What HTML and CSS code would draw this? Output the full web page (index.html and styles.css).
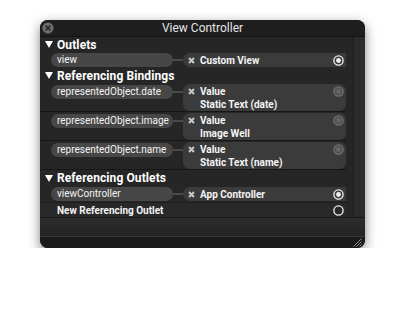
FILE: index.html
```html
<!DOCTYPE html>
<html lang="en">

<head>
    <meta charset="UTF-8">
    <title>View Controller</title>
    <link rel="stylesheet" href="styles.css">
</head>

<body>
    <div class="hud">
        <div class="titlebar">
            <svg class="close" width="12" height="12" viewBox="0 0 12 12">
                <circle cx="6" cy="6" r="5.6" fill="#6d6d6d" />
                <path d="M3.6 3.6 L8.4 8.4 M8.4 3.6 L3.6 8.4" stroke="#2a2a2a" stroke-width="1.6" />
            </svg>
            <span class="title">View Controller</span>
        </div>

        <div class="content">
            <div class="list">
                <div class="section">
                    <svg class="arrow" width="8" height="7" viewBox="0 0 8 7"><polygon points="0,0 8,0 4,7" fill="#fff" /></svg>
                    Outlets
                </div>
                <div class="row">
                    <span class="pill">view</span>
                    <span class="wire"></span>
                    <div class="target">
                        <svg class="x" width="7" height="7" viewBox="0 0 7 7"><path d="M1 1 L6 6 M6 1 L1 6" /></svg>
                        <span class="name">Custom View</span>
                        <svg class="radio" width="11" height="11" viewBox="0 0 11 11"><circle class="ring" cx="5.5" cy="5.5" r="4.6" /><circle class="dot" cx="5.5" cy="5.5" r="2.4" /></svg>
                    </div>
                </div>

                <div class="section">
                    <svg class="arrow" width="8" height="7" viewBox="0 0 8 7"><polygon points="0,0 8,0 4,7" fill="#fff" /></svg>
                    Referencing Bindings
                </div>
                <div class="row binding">
                    <span class="pill">representedObject.date</span>
                    <span class="wire"></span>
                    <div class="target multi">
                        <div class="target-line">
                            <svg class="x" width="7" height="7" viewBox="0 0 7 7"><path d="M1 1 L6 6 M6 1 L1 6" /></svg>
                            <span class="name">Value</span>
                            <svg class="radio dim" width="11" height="11" viewBox="0 0 11 11"><circle class="ring" cx="5.5" cy="5.5" r="4.6" /><circle class="dot" cx="5.5" cy="5.5" r="2.4" /></svg>
                        </div>
                        <div class="target-sub">Static Text (date)</div>
                    </div>
                </div>
                <div class="row binding">
                    <span class="pill">representedObject.image</span>
                    <span class="wire"></span>
                    <div class="target multi">
                        <div class="target-line">
                            <svg class="x" width="7" height="7" viewBox="0 0 7 7"><path d="M1 1 L6 6 M6 1 L1 6" /></svg>
                            <span class="name">Value</span>
                            <svg class="radio dim" width="11" height="11" viewBox="0 0 11 11"><circle class="ring" cx="5.5" cy="5.5" r="4.6" /><circle class="dot" cx="5.5" cy="5.5" r="2.4" /></svg>
                        </div>
                        <div class="target-sub">Image Well</div>
                    </div>
                </div>
                <div class="row binding">
                    <span class="pill">representedObject.name</span>
                    <span class="wire"></span>
                    <div class="target multi">
                        <div class="target-line">
                            <svg class="x" width="7" height="7" viewBox="0 0 7 7"><path d="M1 1 L6 6 M6 1 L1 6" /></svg>
                            <span class="name">Value</span>
                            <svg class="radio dim" width="11" height="11" viewBox="0 0 11 11"><circle class="ring" cx="5.5" cy="5.5" r="4.6" /><circle class="dot" cx="5.5" cy="5.5" r="2.4" /></svg>
                        </div>
                        <div class="target-sub">Static Text (name)</div>
                    </div>
                </div>

                <div class="section last">
                    <svg class="arrow" width="8" height="7" viewBox="0 0 8 7"><polygon points="0,0 8,0 4,7" fill="#fff" /></svg>
                    Referencing Outlets
                </div>
                <div class="row">
                    <span class="pill">viewController</span>
                    <span class="wire"></span>
                    <div class="target">
                        <svg class="x" width="7" height="7" viewBox="0 0 7 7"><path d="M1 1 L6 6 M6 1 L1 6" /></svg>
                        <span class="name">App Controller</span>
                        <svg class="radio" width="11" height="11" viewBox="0 0 11 11"><circle class="ring" cx="5.5" cy="5.5" r="4.6" /><circle class="dot" cx="5.5" cy="5.5" r="2.4" /></svg>
                    </div>
                </div>
                <div class="row new">
                    <span class="new-label">New Referencing Outlet</span>
                    <svg class="radio empty" width="11" height="11" viewBox="0 0 11 11"><circle class="ring" cx="5.5" cy="5.5" r="4.6" /></svg>
                </div>
            </div>
            <div class="scroller"></div>
        </div>

        <div class="band"></div>
        <div class="footer">
            <svg class="grip" width="10" height="10" viewBox="0 0 10 10">
                <path d="M9.5 1.5 L1.5 9.5 M9.5 4.5 L4.5 9.5 M9.5 7.5 L7.5 9.5" stroke="#8c8c8c" stroke-width="1" />
            </svg>
        </div>
    </div>
</body>

</html>
```

FILE: styles.css
```css
/* General styles */
body {
    margin: 0;
    background: #ffffff;
    font-family: Roboto, 'Liberation Sans', sans-serif;
}

.hud {
    width: 325px;
    height: 228px;
    margin: 20px 0 0 40px;
    background: #262626;
    border-radius: 8px;
    box-shadow: 0 4px 12px rgba(0, 0, 0, 0.5);
    overflow: hidden;
    display: flex;
    flex-direction: column;
}

/* Title bar */
.titlebar {
    height: 16px;
    flex-shrink: 0;
    background: #1e1e1e;
    border-bottom: 1px solid #121212;
    display: grid;
    grid-template-columns: 16px 1fr 16px;
    align-items: center;
}

.close {
    margin-left: 2px;
}

.title {
    font-size: 12px;
    line-height: 16px;
    color: #e4e4e4;
    text-align: center;
}

/* List */
.content {
    display: flex;
    height: 180px;
    flex-shrink: 0;
}

.list {
    flex: 1;
    padding-right: 7px;
}

.scroller {
    width: 11px;
    background: #2b2b2b;
    border-left: 1px solid #1c1c1c;
}

.section {
    height: 15px;
    display: flex;
    align-items: center;
    gap: 4px;
    padding-left: 5px;
    font-size: 12px;
    font-weight: 700;
    letter-spacing: 0.1px;
    color: #ffffff;
}

.section.last {
    height: 16px;
}

.row {
    height: 16px;
    display: flex;
    align-items: center;
    padding-left: 11px;
}

.pill {
    width: 122px;
    height: 14px;
    box-sizing: border-box;
    padding-left: 6px;
    border-radius: 7px;
    background: #474747;
    font-size: 10px;
    line-height: 14px;
    color: #f4f4f4;
    white-space: nowrap;
}

.wire {
    width: 10px;
    height: 2px;
    background: #4a4a4a;
}

.target {
    flex: 1;
    height: 14px;
    display: flex;
    align-items: center;
    gap: 5px;
    padding: 0 2px 0 5px;
    border-radius: 7px 0 0 7px;
    background: #3b3b3b;
}

.name {
    font-size: 10px;
    font-weight: 700;
    color: #f4f4f4;
    white-space: nowrap;
}

.x path {
    stroke: #c8c8c8;
    stroke-width: 2;
}

.radio {
    margin-left: auto;
}

.radio .ring {
    fill: none;
    stroke: #f2f2f2;
    stroke-width: 1.3;
}

.radio .dot {
    fill: #f2f2f2;
}

.radio.dim .ring {
    fill: #505050;
    stroke: #727272;
}

.radio.dim .dot {
    fill: #666666;
}

/* Binding rows have two lines */
.row.binding {
    height: 28px;
    align-items: flex-start;
    border-bottom: 1px solid #161616;
}

.row.binding .pill {
    margin-top: 2px;
}

.row.binding .wire {
    margin-top: 8px;
}

.target.multi {
    height: 27px;
    margin-top: 1px;
    display: block;
    padding: 1px 2px 0 5px;
    box-sizing: border-box;
    border-radius: 7px;
}

.target-line {
    height: 13px;
    display: flex;
    align-items: center;
    gap: 5px;
}

.target-sub {
    padding-left: 12px;
    font-size: 10px;
    font-weight: 700;
    line-height: 13px;
    color: #f4f4f4;
}

.row.new {
    height: 14px;
    padding: 0 2px 0 17px;
    border-top: 1px solid #1e1e1e;
    background: #292929;
}

.new-label {
    font-size: 10px;
    font-weight: 700;
    color: #f4f4f4;
}

/* Bottom */
.band {
    height: 18px;
    flex-shrink: 0;
    border-top: 1px solid #171717;
    background: linear-gradient(#2d2d2d, #242424);
}

.footer {
    flex: 1;
    border-top: 1px solid #3a3a3a;
    background: #1b1b1b;
    display: flex;
    justify-content: flex-end;
    align-items: flex-end;
    padding: 0 3px 2px 0;
}
```
